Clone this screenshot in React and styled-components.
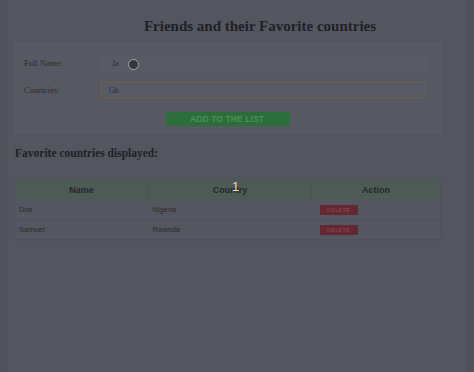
import React from "react";
import styled, { createGlobalStyle } from "styled-components";

const GlobalStyle = createGlobalStyle`
    html, body {
        margin: 0;
        padding: 0;
        background: #50535c;
        height: 100%;
    }
    #root {
        min-height: 100%;
    }
`;

const friends = [
    { name: "Doe", country: "Nigeria" },
    { name: "Samuel", country: "Rwanda" },
];

const App = () => {
    return (
        <Page>
            <GlobalStyle />
            <Container>
                <Title>Friends and their Favorite countries</Title>
                <FormPanel>
                    <FieldRow>
                        <Label>Full Name:</Label>
                        <InputWrap>
                            <Input value="Ja" readOnly />
                            <TouchDot />
                        </InputWrap>
                    </FieldRow>
                    <FieldRow>
                        <Label>Countries:</Label>
                        <InputWrap>
                            <Input value="Gh" readOnly $focused />
                        </InputWrap>
                    </FieldRow>
                    <ButtonRow>
                        <AddButton>ADD TO THE LIST</AddButton>
                    </ButtonRow>
                </FormPanel>
                <SubTitle>Favorite countries displayed:</SubTitle>
                <TableWrap>
                    <ClickMark>1</ClickMark>
                    <Table>
                        <thead>
                            <tr>
                                <Th $w="133px">Name</Th>
                                <Th $w="162px">Country</Th>
                                <Th>Action</Th>
                            </tr>
                        </thead>
                        <tbody>
                            {friends.map((f) => (
                                <tr key={f.name}>
                                    <Td>{f.name}</Td>
                                    <Td>{f.country}</Td>
                                    <Td>
                                        <DeleteButton>DELETE</DeleteButton>
                                    </Td>
                                </tr>
                            ))}
                        </tbody>
                    </Table>
                </TableWrap>
            </Container>
        </Page>
    );
};

export default App;

const Page = styled.div`
    min-height: 372px;
    padding: 0 8px;
    box-sizing: border-box;
    background: #50535c;
`;

const Container = styled.div`
    min-height: 372px;
    background: #53565f;
    padding: 16px 5px 0;
    box-sizing: border-box;
`;

const Title = styled.h1`
    margin: 0 0 6px 46px;
    text-align: center;
    font-family: "Liberation Serif", "Times New Roman", serif;
    font-weight: 700;
    font-size: 15px;
    line-height: 20px;
    color: #1f2127;
`;

const FormPanel = styled.div`
    width: 430px;
    box-sizing: border-box;
    background: #565961;
    box-shadow: 0 0 2px rgba(0, 0, 0, 0.06);
    padding: 12px 15px 8px 11px;
    display: flex;
    flex-direction: column;
    gap: 9px;
`;

const FieldRow = styled.div`
    display: flex;
    align-items: center;
`;

const Label = styled.label`
    width: 76px;
    font-family: "Liberation Serif", "Times New Roman", serif;
    font-size: 8.5px;
    color: #2a2c33;
`;

const InputWrap = styled.div`
    position: relative;
    flex: 1;
    display: flex;
`;

const Input = styled.input`
    flex: 1;
    height: 18px;
    box-sizing: border-box;
    padding: 0 ${(p) => (p.$focused ? "8px" : "11px")};
    font-family: "Liberation Serif", "Times New Roman", serif;
    font-size: 8px;
    color: #2a2c33;
    background: ${(p) => (p.$focused ? "#585b63" : "#585b64")};
    border: ${(p) => (p.$focused ? "1px solid #6b5f4c" : "1px solid transparent")};
    box-shadow: ${(p) => (p.$focused ? "0 0 1px #4a4a44" : "none")};
    outline: none;
    margin-right: ${(p) => (p.$focused ? "2px" : "0")};
`;

const TouchDot = styled.span`
    position: absolute;
    left: 28px;
    top: 5px;
    width: 9px;
    height: 9px;
    border-radius: 50%;
    background: #34363d;
    border: 1.5px solid #a8aab0;
`;

const ButtonRow = styled.div`
    display: flex;
    justify-content: center;
    padding: 4px 0 0 2px;
`;

const AddButton = styled.button`
    width: 123px;
    height: 14px;
    padding: 0;
    border: none;
    background: #2c6e3b;
    color: #4a9158;
    font-family: "Liberation Sans", Arial, sans-serif;
    font-weight: 700;
    font-size: 8.5px;
    letter-spacing: 0.1px;
`;

const SubTitle = styled.h2`
    margin: 12px 0 0 2px;
    font-family: "Liberation Serif", "Times New Roman", serif;
    font-weight: 700;
    font-size: 11.5px;
    line-height: 14px;
    color: #1f2127;
`;

const TableWrap = styled.div`
    position: relative;
    margin: 19px 0 0 2px;
    width: 425px;
`;

const ClickMark = styled.span`
    position: absolute;
    left: 217px;
    top: 0;
    font-family: "Liberation Sans", Arial, sans-serif;
    font-size: 13px;
    color: #d8dade;
    z-index: 1;
`;

const Table = styled.table`
    width: 100%;
    table-layout: fixed;
    border-collapse: collapse;
    font-family: "Liberation Sans", Arial, sans-serif;
    background: #54575f;
    box-shadow: 0 0 2px rgba(0, 0, 0, 0.08);
`;

const Th = styled.th`
    width: ${(p) => p.$w || "auto"};
    height: 21px;
    padding: 0;
    background: #4e5a55;
    border-right: 1px solid #4a5550;
    font-size: 9px;
    font-weight: 700;
    color: #25272c;
    &:last-child {
        border-right: none;
    }
`;

const Td = styled.td`
    height: 19px;
    padding: 0 4px;
    border-bottom: 1px solid #4e5159;
    font-size: 7.5px;
    color: #2a2c32;
    text-align: left;
    &:last-child {
        padding-left: 8px;
    }
`;

const DeleteButton = styled.button`
    width: 38px;
    height: 10px;
    padding: 0;
    border: none;
    background: #642834;
    color: #8a4a55;
    font-family: "Liberation Sans", Arial, sans-serif;
    font-size: 5.5px;
    letter-spacing: 0.3px;
    display: block;
`;
